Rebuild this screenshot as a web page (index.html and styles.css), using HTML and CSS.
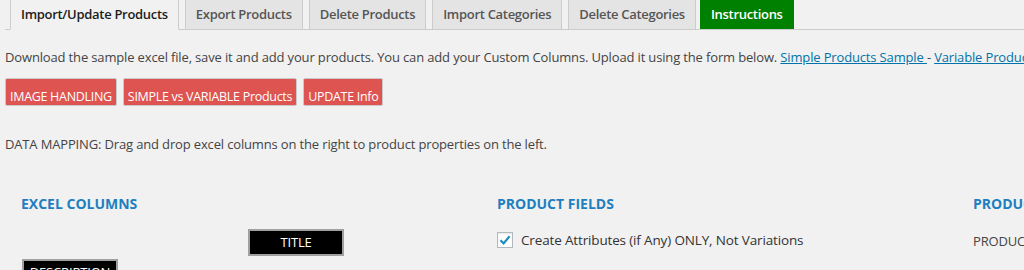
FILE: index.html
```html
<!DOCTYPE html>
<html>
<head>
<meta charset="utf-8">
<link rel="stylesheet" href="styles.css">
</head>
<body>
<div class="wrap">
  <nav class="tabs">
    <a class="tab active">Import/Update Products</a>
    <a class="tab">Export Products</a>
    <a class="tab">Delete Products</a>
    <a class="tab">Import Categories</a>
    <a class="tab">Delete Categories</a>
    <a class="tab green">Instructions</a>
  </nav>
  <p class="intro">Download the sample excel file, save it and add your products. You can add your Custom Columns. Upload it using the form below. <a class="link">Simple Products Sample </a> - <a class="link">Variable Products Sample</a></p>
  <div class="btns">
    <span class="rbtn">IMAGE HANDLING</span>
    <span class="rbtn">SIMPLE vs VARIABLE Products</span>
    <span class="rbtn">UPDATE Info</span>
  </div>
  <p class="mapping">DATA MAPPING: Drag and drop excel columns on the right to product properties on the left.</p>
  <div class="cols">
    <div class="col">
      <h3 class="head">EXCEL COLUMNS</h3>
      <div class="excel">
        <div class="chip title-chip">TITLE</div>
        <div class="chip desc-chip">DESCRIPTION</div>
      </div>
    </div>
    <div class="col">
      <h3 class="head">PRODUCT FIELDS</h3>
      <label class="check"><span class="box"><svg width="12" height="12" viewBox="0 0 12 12"><path d="M1.5 6.2 L4.6 9.4 L10.6 2.2" fill="none" stroke="#1e8cbe" stroke-width="2.2"/></svg></span>Create Attributes (if Any) ONLY, Not Variations</label>
      <p class="field">ID (for update purpose only)</p>
    </div>
    <div class="col">
      <h3 class="head">PRODUCT ATTRIBUTES</h3>
      <p class="plain">PRODUCT ATTRIBUTES</p>
    </div>
  </div>
</div>
</body>
</html>
```
FILE: styles.css
```css
html, body { margin: 0; padding: 0; }
body {
  background: #f1f1f1;
  font-family: "Open Sans", "Noto Sans", sans-serif;
  font-size: 13px;
  letter-spacing: -0.15px;
  color: #444;
  width: 1024px;
  height: 270px;
  overflow: hidden;
}
.wrap { padding: 0 0 0 5px; width: 1600px; }
.tabs {
  display: flex;
  gap: 6px;
  padding-left: 5px;
  border-bottom: 1px solid #ccc;
  height: 29px;
  margin-right: 580px;
}
.tab {
  display: block;
  box-sizing: border-box;
  height: 30px;
  padding: 3px 10px 0;
  font-size: 13px;
  font-weight: 600;
  letter-spacing: -0.3px;
  line-height: 24px;
  color: #555;
  background: #e4e4e4;
  border: 1px solid #ccc;
  border-top: none;
  border-bottom: none;
  margin-top: -1px;
}
.tab.active { background: #f1f1f1; color: #1d1d1d; border-bottom: 1px solid #f1f1f1; height: 31px; }
.tab.green { background: #008000; color: #fff; border-color: #008000; margin-left: -2px; }
.intro { margin: 17px 0 0; line-height: 20px; }
.link { color: #0073aa; text-decoration: underline; }
.btns { display: flex; gap: 6px; margin-top: 11px; }
.rbtn {
  display: block;
  background: #dd5451;
  color: #fff;
  border: 1px solid #c9c9c9;
  border-radius: 2px;
  padding: 10px 4px 0;
  height: 16px;
  line-height: 16px;
  font-size: 12.5px;
  letter-spacing: -0.3px;
}
.mapping { margin: 28px 0 0; line-height: 20px; }
.cols { display: flex; margin-top: 40px; padding-left: 16px; }
.col { width: 476px; flex: none; }
.head {
  margin: 0;
  font-size: 14px;
  letter-spacing: 0;
  font-weight: 700;
  color: #1e7fc0;
  line-height: 20px;
}
.excel { position: relative; height: 60px; }
.chip {
  box-sizing: border-box;
  width: 96px;
  height: 27px;
  background: #000;
  color: #fff;
  border: 2px solid #a0a0a0;
  text-align: center;
  line-height: 23px;
  font-size: 13px;
}
.title-chip { margin: 15px 0 0 227px; }
.desc-chip { margin: 3px 0 0 1px; }
.check { display: flex; align-items: center; gap: 8px; margin-top: 16px; font-size: 13.5px; letter-spacing: -0.15px; color: #333; line-height: 20px; }
.box {
  box-sizing: border-box;
  width: 16px; height: 16px;
  border: 1px solid #b4b9be;
  background: #fff;
  display: flex; align-items: center; justify-content: center;
  box-shadow: inset 0 1px 2px rgba(0,0,0,.1);
}
.field { margin: 16px 0 0; }
.plain { margin: 18px 0 0; }
```
